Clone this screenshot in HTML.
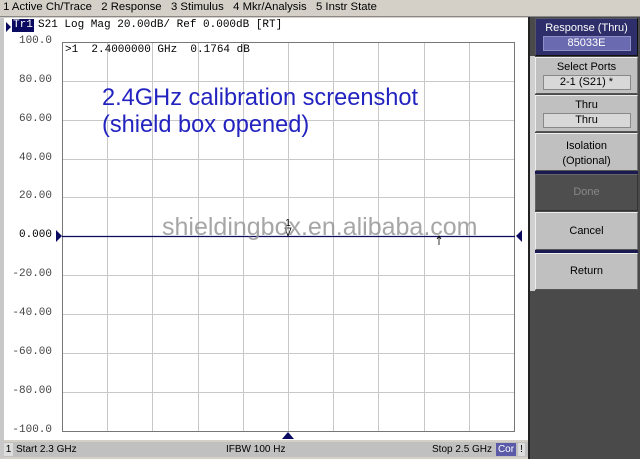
<!DOCTYPE html>
<html><head><style>
body{margin:0;width:640px;height:459px;overflow:hidden;background:#d4d0c8;position:relative;font-family:"Liberation Sans",sans-serif}
.a{position:absolute}
.menu{left:0;top:0;width:640px;height:16px;background:#d4d0c8;font-size:11.3px;line-height:15px;color:#000;border-bottom:1px solid #888}
.mono{font-family:"Liberation Mono",monospace;font-size:11px}
.lab{font-family:"Liberation Mono",monospace;font-size:11px;color:#444;width:52px;text-align:right;left:0}
.btn{left:535px;width:103px;background:#c0c0c0;border-top:1px solid #eee;border-left:1px solid #eee;border-right:1px solid #777;border-bottom:1px solid #555;text-align:center;font-size:11px;color:#000;box-sizing:border-box}
.box{margin:2px auto 0;width:86px;height:13px;line-height:13px;background:#d8d8d8;border:1px solid #888}
</style></head><body>
<div class="a menu">&nbsp;1 Active Ch/Trace &nbsp;&nbsp;2 Response &nbsp;&nbsp;3 Stimulus &nbsp;&nbsp;4 Mkr/Analysis &nbsp;&nbsp;5 Instr State</div>
<div class="a" style="left:4px;top:18px;width:524px;height:422px;background:#fff"></div>
<div class="a" style="left:0;top:18px;width:4px;height:440px;background:#c8c8c8"></div>
<div class="a" style="left:6px;top:22px;width:0;height:0;border-top:5px solid transparent;border-bottom:5px solid transparent;border-left:5px solid #0a0a60"></div>
<div class="a mono" style="left:12px;top:19px;height:13px;line-height:13px;background:#0a0a60;color:#fff;padding:0 1px">Tr1</div>
<div class="a mono" style="left:38px;top:19px;line-height:13px;color:#000">S21 Log Mag 20.00dB/ Ref 0.000dB [RT]</div>
<svg class="a" style="left:0;top:0" width="530" height="440">
<g stroke="#c8c8c8" stroke-width="1">
<line x1="107.5" y1="42" x2="107.5" y2="431"/><line x1="152.5" y1="42" x2="152.5" y2="431"/><line x1="198.5" y1="42" x2="198.5" y2="431"/><line x1="243.5" y1="42" x2="243.5" y2="431"/><line x1="288.5" y1="42" x2="288.5" y2="431"/><line x1="333.5" y1="42" x2="333.5" y2="431"/><line x1="378.5" y1="42" x2="378.5" y2="431"/><line x1="424.5" y1="42" x2="424.5" y2="431"/><line x1="469.5" y1="42" x2="469.5" y2="431"/>
<line x1="62" y1="81.5" x2="515" y2="81.5"/><line x1="62" y1="120.5" x2="515" y2="120.5"/><line x1="62" y1="159.5" x2="515" y2="159.5"/><line x1="62" y1="197.5" x2="515" y2="197.5"/><line x1="62" y1="275.5" x2="515" y2="275.5"/><line x1="62" y1="314.5" x2="515" y2="314.5"/><line x1="62" y1="353.5" x2="515" y2="353.5"/><line x1="62" y1="392.5" x2="515" y2="392.5"/>
</g>
<rect x="62.5" y="42.5" width="452" height="389" fill="none" stroke="#777"/>
<line x1="62" y1="236.5" x2="515" y2="236.5" stroke="#0a0a60" stroke-width="1.3"/>
<polygon points="56,230 62,236 56,242" fill="#0a0a60"/>
<polygon points="522,230 516,236 522,242" fill="#0a0a60"/>
<polygon points="282,439 288,432 294,439" fill="#0a0a60"/>
<text x="288" y="226" font-size="10" text-anchor="middle" font-family="Liberation Sans">1</text>
<path d="M285 228 L291 228 L288 236 Z" fill="none" stroke="#000" stroke-width="0.8"/>
<path d="M439 245 V237 M437 239 L439 236 L441 239" stroke="#000" fill="none" stroke-width="0.8"/>
</svg>
<div class="a mono" style="left:65px;top:44px;color:#000">&gt;1 &nbsp;2.4000000 GHz &nbsp;0.1764 dB</div>
<div class="a lab" style="top:35px">100.0</div>
<div class="a lab" style="top:74px">80.00</div>
<div class="a lab" style="top:113px">60.00</div>
<div class="a lab" style="top:152px">40.00</div>
<div class="a lab" style="top:190px">20.00</div>
<div class="a lab" style="top:229px;color:#000">0.000</div>
<div class="a lab" style="top:268px">-20.00</div>
<div class="a lab" style="top:307px">-40.00</div>
<div class="a lab" style="top:346px">-60.00</div>
<div class="a lab" style="top:385px">-80.00</div>
<div class="a lab" style="top:424px">-100.0</div>
<div class="a" style="left:102px;top:85px;font-size:23.6px;line-height:27px;color:#2323c0">2.4GHz calibration screenshot<br>(shield box opened)</div>
<div class="a" style="left:162px;top:213px;font-size:25px;color:rgba(150,150,150,0.85)">shieldingbox.en.alibaba.com</div>
<div class="a" style="left:4px;top:442px;width:524px;height:15px;background:#c0c0c0;font-size:10px;line-height:15px"></div>
<div class="a" style="left:4px;top:443px;width:9px;height:13px;background:#ddd;font-size:10px;line-height:13px;text-align:center">1</div>
<div class="a" style="left:16px;top:443px;font-size:10px;line-height:14px">Start 2.3 GHz</div>
<div class="a" style="left:226px;top:443px;font-size:10px;line-height:14px">IFBW 100 Hz</div>
<div class="a" style="left:432px;top:443px;font-size:10px;line-height:14px">Stop 2.5 GHz</div>
<div class="a" style="left:496px;top:443px;width:20px;height:13px;background:#5a5aa8;color:#fff;font-size:10px;line-height:13px;text-align:center">Cor</div>
<div class="a" style="left:518px;top:443px;width:7px;height:13px;background:#ddd;font-size:10px;line-height:13px;text-align:center">!</div>
<div class="a" style="left:528px;top:17px;width:112px;height:442px;background:#4a4a4a;border-left:2px solid #222;box-sizing:border-box"></div>
<div class="a" style="left:530px;top:56px;width:5px;height:235px;background:#d0d0d0"></div>
<div class="a btn" style="top:18px;height:38px;background:#2e2e6a;color:#fff;border-color:#556 #111 #111 #556;padding-top:3px">Response (Thru)<div class="box" style="background:#6a6ab0;border-color:#9090c8;color:#fff">85033E</div></div>
<div class="a btn" style="top:57px;height:37px;padding-top:3px">Select Ports<div class="box">2-1 (S21) *</div></div>
<div class="a btn" style="top:95px;height:37px;padding-top:3px">Thru<div class="box">Thru</div></div>
<div class="a btn" style="top:133px;height:38px;padding-top:5px;line-height:15px">Isolation<br>(Optional)</div>
<div class="a" style="left:535px;top:171px;width:103px;height:3px;background:#1a1a50"></div>
<div class="a btn" style="top:174px;height:37px;line-height:35px;background:#4e4e4e;color:#888;border-color:#666 #333 #333 #666">Done</div>
<div class="a btn" style="top:212px;height:38px;line-height:36px">Cancel</div>
<div class="a" style="left:535px;top:250px;width:103px;height:3px;background:#1a1a50"></div>
<div class="a btn" style="top:253px;height:37px;line-height:35px">Return</div>
</body></html>
